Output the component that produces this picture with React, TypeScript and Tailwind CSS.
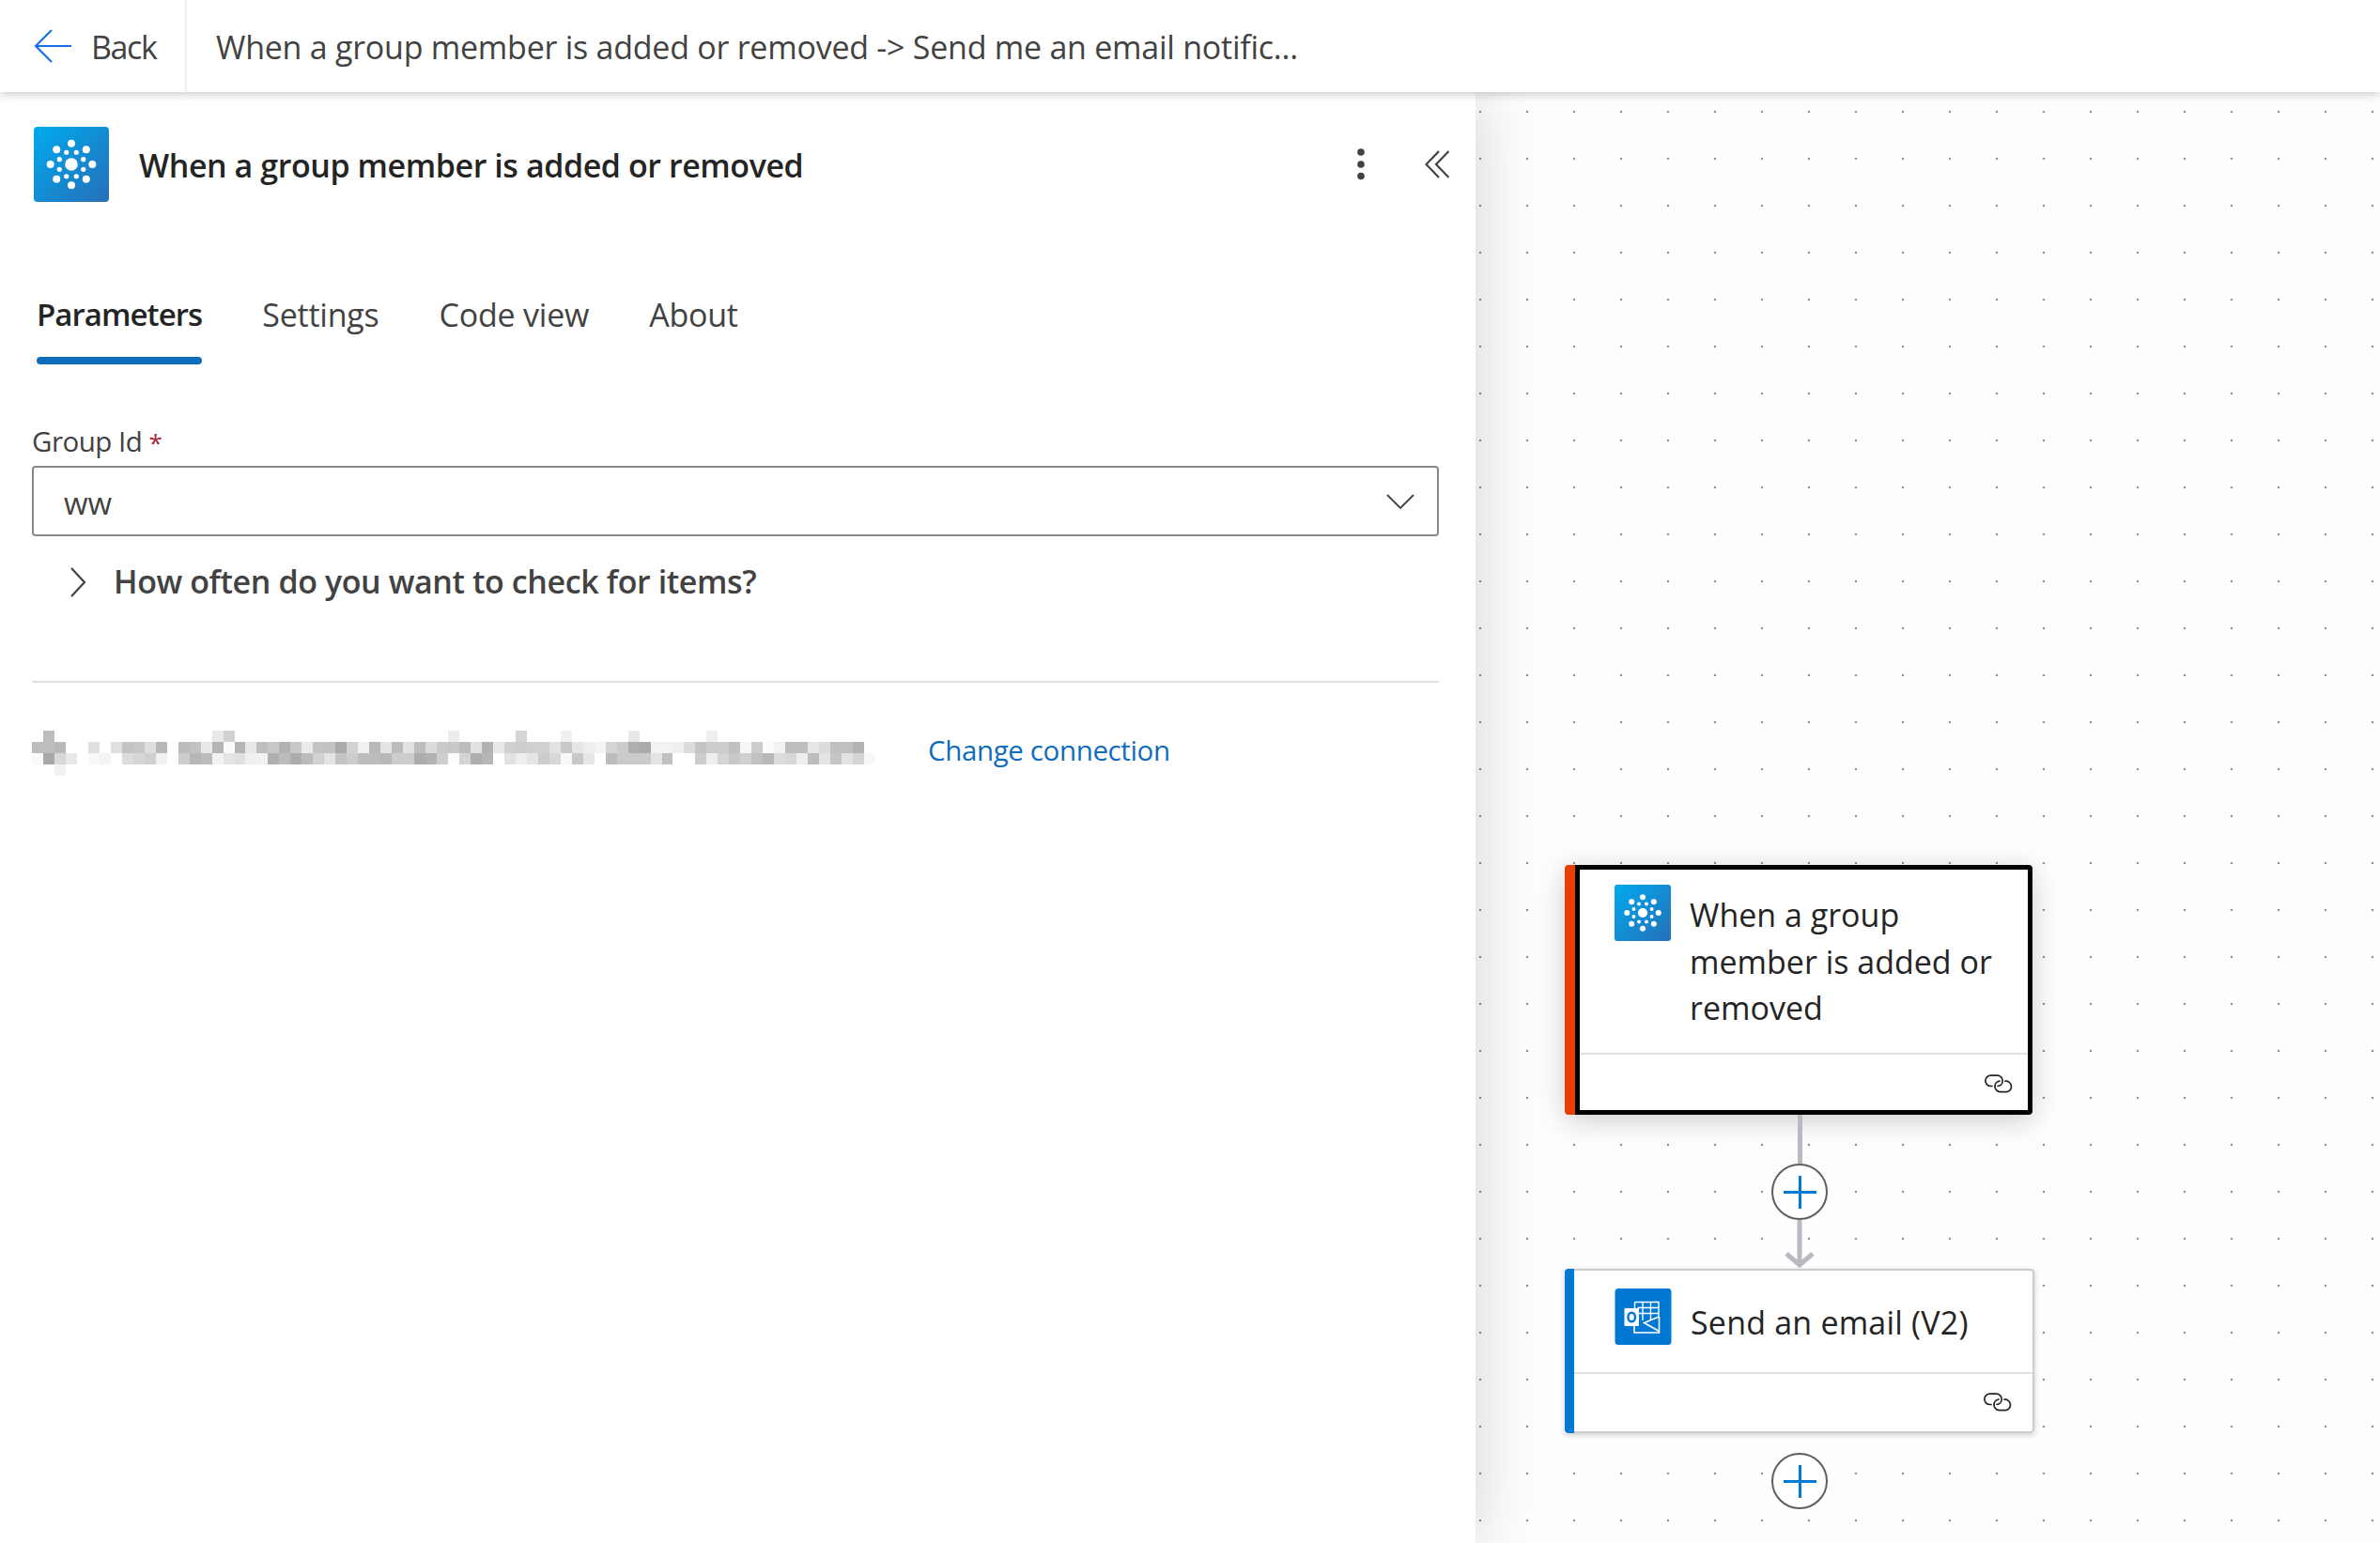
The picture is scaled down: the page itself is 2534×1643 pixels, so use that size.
const row1 =
  "bd be b9 ff ff e0 ff df c4 c8 de b8 fd bc c2 e8 b4 fa b5 e8 be c8 b2 c8 eb c4 c2 aa d2 f0 b8 e4 bc e2 be dc ca c8 bc e2 b2 e8 d0 cc d0 d0 e2 c8 e6 ee f4 d4 cc ae aa f2 f2 ee dc c4 cc cc c0 f6 cc fc f2 be be e6 dc c0 c0 b4 ff";
const row2 =
  "fa a8 d8 e8 ff f8 f4 ff dc d6 d0 f2 ff cc b6 bc f2 e4 e0 f0 f2 b0 bc ac bc d2 e4 c4 cc bc bc b8 cc cc ac b2 ce fc d4 ae b6 ff e2 ee e4 cc d8 f8 c8 e6 ff bc ca ca ca e4 c0 ff ff cc ee d4 c8 d0 c0 b8 dc d8 ee bc e4 c4 e2 d4 f8";
const sparseTop: [number, string][] = [
  [1, "bd"], [16, "e8"], [17, "d2"], [37, "ec"], [43, "d4"], [47, "f0"], [53, "e8"], [60, "ee"],
];

function BlurredAccount() {
  return (
    <svg width="898" height="48" viewBox="0 0 75 4" preserveAspectRatio="none" shapeRendering="crispEdges" className="shrink-0">
      {sparseTop.map(([x, v]) => (
        <rect key={x} x={x} y={0} width={1} height={1} fill={`#${v}${v}${v}`} />
      ))}
      {row1.split(" ").map((v, i) => (
        <rect key={i} x={i} y={1} width={1} height={1} fill={`#${v}${v}${v}`} />
      ))}
      {row2.split(" ").map((v, i) => (
        <rect key={i} x={i} y={2} width={1} height={1} fill={`#${v}${v}${v}`} />
      ))}
      <rect x={2} y={3} width={1} height={1} fill="#f2f2f2" />
    </svg>
  );
}

function GroupIcon({ size, id, className }: { size: number; id: string; className?: string }) {
  const angles = [0, 1, 2, 3, 4, 5, 6, 7];
  return (
    <svg width={size} height={size} viewBox="0 0 80 80" className={className}>
      <defs>
        <linearGradient id={id} x1="0" y1="0" x2="1" y2="1">
          <stop offset="0" stopColor="#00a9ee" />
          <stop offset="1" stopColor="#2670b8" />
        </linearGradient>
      </defs>
      <rect width="80" height="80" rx="4" fill={`url(#${id})`} />
      <circle cx="40" cy="40" r="6.8" fill="white" />
      {angles.map((a) => (
        <circle
          key={a}
          cx={40 + 22.3 * Math.sin((a * Math.PI) / 4)}
          cy={40 - 22.3 * Math.cos((a * Math.PI) / 4)}
          r="4"
          fill="white"
        />
      ))}
      {angles.map((a) => (
        <circle
          key={a}
          cx={40 + 13.8 * Math.sin(((a + 0.5) * Math.PI) / 4)}
          cy={40 - 13.8 * Math.cos(((a + 0.5) * Math.PI) / 4)}
          r="2.6"
          fill="white"
        />
      ))}
    </svg>
  );
}

function OutlookIcon() {
  return (
    <svg width="61" height="60" viewBox="0 0 60 60" className="shrink-0">
      <rect width="60" height="60" rx="3.5" fill="#0078d4" />
      <path d="M21 14.5H46.5V31M21 14.5V22M29.5 14.5V34M38 14.5V34M24 20.5H46.5M24 26.5H46.5" stroke="white" strokeWidth="1.4" fill="none" />
      <path d="M47 30L31 36.5L47 45.5M20.5 40V47H47V30" stroke="white" strokeWidth="1.6" fill="none" />
      <rect x="10" y="21" width="15.5" height="19" rx="1" fill="white" />
      <ellipse cx="17.7" cy="30.5" rx="3.8" ry="4.8" stroke="#0078d4" strokeWidth="2.4" fill="none" />
    </svg>
  );
}

function ChainIcon() {
  return (
    <svg width="30" height="20" viewBox="0 0 30 20" fill="none" stroke="#242424" strokeWidth="1.7" strokeLinecap="round">
      <path d="M8 12.5H6.5A5.6 5.6 0 0 1 6.5 1.2H13.5A5.6 5.6 0 0 1 19.2 6.8A5.6 5.6 0 0 1 14 12.5" />
      <path d="M22 7.2A5.6 5.6 0 0 1 23.5 18.6H16.5A5.6 5.6 0 0 1 11 13A5.6 5.6 0 0 1 16 7.2" />
    </svg>
  );
}

function PlusButton() {
  return (
    <button className="flex size-[60px] shrink-0 items-center justify-center rounded-full border-2 border-[#605e5c] bg-white">
      <svg width="35" height="35" viewBox="0 0 35 35" stroke="#0078d4" strokeWidth="3">
        <path d="M0 17.5H35M17.5 0V35" />
      </svg>
    </button>
  );
}

export default function App() {
  return (
    <div className="flex h-screen w-full flex-col overflow-hidden bg-white font-['Open_Sans',sans-serif] text-[#424242]">
      <header className="relative z-20 flex h-[98px] shrink-0 items-center bg-white shadow-[0_2px_10px_rgba(0,0,0,0.22)]">
        <button className="flex h-full w-[199px] shrink-0 items-center gap-[21px] border-r-2 border-[#eeeeee] pl-9">
          <svg width="40" height="36" viewBox="0 0 40 36" fill="none" stroke="#1a6fe8" strokeWidth="2.2">
            <path d="M19 1L2 18L19 35M2 18H40" />
          </svg>
          <span className="pt-0.5 text-[34px] leading-[50px] tracking-[-1.4px]">Back</span>
        </button>
        <div className="pl-[31px] pt-0.5 text-[34px] leading-[50px] tracking-[-0.25px]">
          When a group member is added or removed -&gt; Send me an email notific...
        </div>
      </header>

      <div className="flex min-h-0 flex-1">
        <aside className="relative z-10 w-[1571px] shrink-0 bg-white shadow-[0_0_70px_rgba(0,0,0,0.18)]">
          <div className="flex items-center pl-9 pr-7 pt-[37px]">
            <GroupIcon size={80} id="panel-icon" className="shrink-0" />
            <h1 className="ml-8 flex-1 pt-0.5 text-[34px] font-semibold leading-[50px] tracking-[-0.43px] text-[#242424]">
              When a group member is added or removed
            </h1>
            <svg width="8" height="34" viewBox="0 0 8 34" fill="#424242" className="shrink-0">
              <circle cx="4" cy="4" r="3.8" />
              <circle cx="4" cy="17" r="3.8" />
              <circle cx="4" cy="29.5" r="3.8" />
            </svg>
            <svg width="26" height="30" viewBox="0 0 26 30" fill="none" stroke="#424242" strokeWidth="2.2" className="ml-16 shrink-0">
              <path d="M15 1L1.5 15L15 29M25.5 1L12 15L25.5 29" />
            </svg>
          </div>

          <nav className="mt-[95px] flex gap-[64px] pl-[39px] text-[34px] leading-[50px] tracking-[-0.22px]">
            <div className="flex flex-col">
              <span className="text-[33px] font-semibold tracking-[-0.95px] text-[#242424]">Parameters</span>
              <span className="mt-5 h-2 w-full rounded-full bg-[#0f6cbd]" />
            </div>
            <span>Settings</span>
            <span>Code view</span>
            <span>About</span>
          </nav>

          <div className="w-[1532px] pl-[34px]">
            <label className="mt-16 block text-[29.5px] leading-9 tracking-[-0.5px]">
              Group Id <span className="text-[26px] text-[#a4262c]">*</span>
            </label>
            <div className="mt-[7px] flex h-[75px] items-center justify-between rounded border-2 border-[#888888] pl-8 pr-6">
              <span className="pt-1 text-[33px]">ww</span>
              <svg width="30" height="16" viewBox="0 0 30 16" fill="none" stroke="#424242" strokeWidth="1.8">
                <path d="M1 1L15 15L29 1" />
              </svg>
            </div>
            <div className="mt-[25px] flex h-[50px] items-center pl-10">
              <svg width="18" height="32" viewBox="0 0 18 32" fill="none" stroke="#424242" strokeWidth="2.2" className="mb-0.5">
                <path d="M2 1L16 16L2 31" />
              </svg>
              <span className="mb-1 ml-[29px] text-[34px] font-semibold tracking-[-0.4px]">How often do you want to check for items?</span>
            </div>
            <div className="mt-[79px] h-0.5 bg-[#e0e0e0]" />
            <div className="mt-[50px] flex items-center">
              <BlurredAccount />
              <a className="mb-[5px] ml-[56px] text-[29.5px] tracking-[-0.37px] text-[#0f6cbd]">Change connection</a>
            </div>
          </div>
        </aside>

        <main className="min-w-0 flex-1 bg-[#fefefe] bg-[radial-gradient(circle,#8f8f8f_1.2px,transparent_1.6px)] bg-[size:50px_50px] bg-[position:-20px_-4px] pl-[95px] pt-[823px]">
          <div className="flex h-[266px] w-[498px] text-[34px] font-medium leading-[49.5px] text-[#242424] shadow-[0_6px_30px_rgba(0,0,0,0.2)]">
            <div className="w-[11px] shrink-0 rounded-l bg-[#ea3e00]" />
            <div className="flex flex-1 flex-col rounded-r border-[5px] border-black bg-white">
              <div className="flex h-[195px] items-start pl-[37px] pt-[16px]">
                <GroupIcon size={60} id="card-icon" className="shrink-0" />
                <div className="ml-5 mt-2">When a group member is added or removed</div>
              </div>
              <div className="flex flex-1 items-center justify-end border-t-2 border-[#e0e0e0] pr-4 pt-0.5">
                <ChainIcon />
              </div>
            </div>
          </div>

          <div className="ml-[220px] flex w-[60px] flex-col items-center">
            <div className="h-[52px] w-[5px] bg-[#b9b9c1]" />
            <PlusButton />
            <svg width="32" height="52" viewBox="0 0 32 52" fill="none" stroke="#b9b9c1" strokeWidth="5">
              <path d="M16 0V48M2 36L16 48L30 36" />
            </svg>
          </div>

          <div className="flex h-[175px] w-[500px] text-[34px] font-medium leading-[50px] tracking-[0.2px] text-[#242424] shadow-[0_2px_6px_rgba(0,0,0,0.2)]">
            <div className="w-[10px] shrink-0 rounded-l bg-[#0078d4]" />
            <div className="flex flex-1 flex-col rounded-r border-2 border-l-0 border-[#cccccc] bg-white">
              <div className="flex h-[108px] items-start pl-[43px] pt-[19px]">
                <OutlookIcon />
                <div className="ml-5 mt-[11px]">Send an email (V2)</div>
              </div>
              <div className="flex flex-1 items-center justify-end border-t-2 border-[#e0e0e0] pb-0.5 pr-[22px]">
                <ChainIcon />
              </div>
            </div>
          </div>

          <div className="ml-[220px] mt-[21px]">
            <PlusButton />
          </div>
        </main>
      </div>
    </div>
  );
}
